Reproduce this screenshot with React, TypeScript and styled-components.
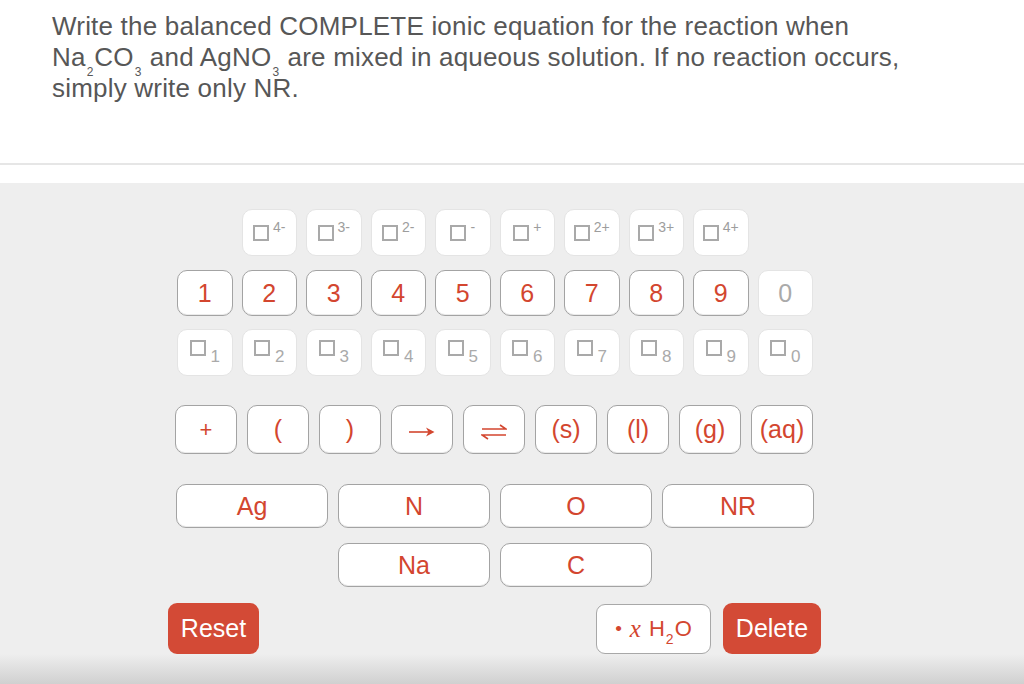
import React from 'react';
import styled, { createGlobalStyle, css } from 'styled-components';

const GlobalStyle = createGlobalStyle`
    html, body {
        margin: 0;
        padding: 0;
        background: #fff;
        font-family: "Liberation Sans", Arial, Helvetica, sans-serif;
    }
`;

const RED = '#d3462f';

const Page = styled.div`
    width: 1024px;
    height: 684px;
    overflow: hidden;
    display: flex;
    flex-direction: column;
`;

const Prompt = styled.div`
    box-sizing: border-box;
    height: 165px;
    padding: 11px 52px 0;
    border-bottom: 2px solid #e6e6e6;
    color: #575757;
    font-size: 26px;
    letter-spacing: 0.2px;
    line-height: 31px;
`;

const Sub = styled.sub`
    font-size: 12px;
    letter-spacing: 0;
    line-height: 0;
    position: relative;
    vertical-align: baseline;
    top: 10px;
    margin: 0 1px;
`;

const Panel = styled.section`
    flex: 1;
    margin-top: 18px;
    padding: 26px 0 0 168px;
    background: linear-gradient(to bottom, #eeeeee 0, #eeeeee calc(100% - 30px), #d0d0d0 100%);
`;

const Keypad = styled.div`
    width: 653px;
    display: flex;
    flex-direction: column;
`;

const KeyGrid = styled.div<{ $cols: number; $gap: number; $left: number; $right: number; $top: number; $h: number }>`
    display: grid;
    grid-template-columns: repeat(${p => p.$cols}, 1fr);
    grid-auto-rows: ${p => p.$h}px;
    column-gap: ${p => p.$gap}px;
    row-gap: 15px;
    margin-top: ${p => p.$top}px;
    margin-left: ${p => p.$left}px;
    margin-right: ${p => p.$right}px;
`;

const Key = styled.button<{ $outlined?: boolean; $muted?: boolean; $col?: number; $size?: number }>`
    box-sizing: border-box;
    display: flex;
    align-items: center;
    justify-content: center;
    padding: 0;
    background: #fff;
    border-radius: 10px;
    font-family: inherit;
    font-size: ${p => p.$size ?? 25}px;
    color: ${p => (p.$muted ? '#aaaaaa' : RED)};
    cursor: pointer;
    ${p => p.$col && css`grid-column-start: ${p.$col};`}
    ${p =>
        p.$outlined
            ? css`
                  border: 1px solid #a3a3a3;
                  box-shadow: inset 0 -1px 0 rgba(0, 0, 0, 0.08);
              `
            : css`
                  border: 1px solid #e4e4e4;
              `}
`;

const Slot = styled.span`
    box-sizing: border-box;
    width: 16px;
    height: 16px;
    border: 2px solid #a9a9a9;
`;

const SlotGroup = styled.span`
    display: inline-flex;
    align-items: flex-start;
`;

const Charge = styled.span`
    font-size: 14px;
    line-height: 14px;
    color: #9d9d9d;
    margin: -5px 0 0 4px;
`;

const Index = styled.span`
    font-size: 17px;
    line-height: 17px;
    color: #aaaaaa;
    margin: 8px 0 0 5px;
`;

const ArrowIcon = styled.svg`
    display: block;
    margin-top: 5px;
`;

const BottomBar = styled.div`
    display: flex;
    justify-content: space-between;
    align-items: center;
    margin-top: 16px;
    height: 51px;
`;

const ActionButton = styled.button<{ $w: number }>`
    width: ${p => p.$w}px;
    height: 51px;
    border: none;
    border-radius: 9px;
    background: #d34a36;
    color: #fff;
    font-family: inherit;
    font-size: 25px;
    padding: 0;
    cursor: pointer;
`;

const RightGroup = styled.div`
    display: flex;
    gap: 12px;
    align-items: center;
`;

const WaterButton = styled.button`
    box-sizing: border-box;
    width: 115px;
    height: 50px;
    border: 1px solid #a8a8a8;
    border-radius: 9px;
    background: #fff;
    color: ${RED};
    font-family: inherit;
    font-size: 22px;
    display: flex;
    align-items: center;
    justify-content: center;
    gap: 8px;
    padding: 0;
    cursor: pointer;
`;

const Dot = styled.span`
    font-size: 19px;
`;

const MathX = styled.span`
    font-family: "Liberation Serif", "Times New Roman", serif;
    font-style: italic;
    font-size: 25px;
`;

const WaterSub = styled.sub`
    font-size: 14px;
    line-height: 0;
    position: relative;
    vertical-align: baseline;
    top: 8px;
    margin: 0 1px;
`;

const RightArrow = () => (
    <ArrowIcon width="26" height="12" viewBox="0 0 26 12" aria-label="→">
        <path d="M0 6 H22" stroke={RED} strokeWidth="1.6" />
        <path d="M25.5 6 L17 1.5 L19.5 6 L17 10.5 Z" fill={RED} />
    </ArrowIcon>
);

const Equilibrium = () => (
    <ArrowIcon width="26" height="16" viewBox="0 0 26 16" aria-label="⇌">
        <path d="M1 5 H25 L19 1" stroke={RED} strokeWidth="1.6" fill="none" strokeLinejoin="miter" />
        <path d="M25 11 H1 L7 15" stroke={RED} strokeWidth="1.6" fill="none" strokeLinejoin="miter" />
    </ArrowIcon>
);

const charges = ['4-', '3-', '2-', '-', '+', '2+', '3+', '4+'];
const digits = ['1', '2', '3', '4', '5', '6', '7', '8', '9', '0'];
const symbols: { id: string; label: React.ReactNode; size?: number }[] = [
    { id: 'plus', label: '+', size: 22 },
    { id: 'open', label: '(' },
    { id: 'close', label: ')' },
    { id: 'arrow', label: <RightArrow /> },
    { id: 'eq', label: <Equilibrium /> },
    { id: 's', label: '(s)' },
    { id: 'l', label: '(l)' },
    { id: 'g', label: '(g)' },
    { id: 'aq', label: '(aq)' },
];

const App: React.FC = () => {
    return (
        <>
            <GlobalStyle />
            <Page>
                <Prompt>
                    Write the balanced COMPLETE ionic equation for the reaction when
                    <br />
                    Na<Sub>2</Sub>CO<Sub>3</Sub> and AgNO<Sub>3</Sub> are mixed in aqueous solution. If no reaction occurs,
                    <br />
                    simply write only NR.
                </Prompt>

                <Panel>
                    <Keypad>
                        <KeyGrid $cols={10} $gap={9} $left={9} $right={8} $top={0} $h={47}>
                            {charges.map((c, i) => (
                                <Key key={c} $col={i === 0 ? 2 : undefined}>
                                    <SlotGroup>
                                        <Slot />
                                        <Charge>{c}</Charge>
                                    </SlotGroup>
                                </Key>
                            ))}
                        </KeyGrid>

                        <KeyGrid $cols={10} $gap={9} $left={9} $right={8} $top={14} $h={46}>
                            {digits.map(d => (
                                <Key key={d} $outlined={d !== '0'} $muted={d === '0'}>
                                    {d}
                                </Key>
                            ))}
                        </KeyGrid>

                        <KeyGrid $cols={10} $gap={9} $left={9} $right={8} $top={13} $h={47}>
                            {digits.map(d => (
                                <Key key={d}>
                                    <SlotGroup>
                                        <Slot />
                                        <Index>{d}</Index>
                                    </SlotGroup>
                                </Key>
                            ))}
                        </KeyGrid>

                        <KeyGrid $cols={9} $gap={10} $left={7} $right={8} $top={29} $h={49}>
                            {symbols.map(s => (
                                <Key key={s.id} $outlined $size={s.size}>
                                    {s.label}
                                </Key>
                            ))}
                        </KeyGrid>

                        <KeyGrid $cols={4} $gap={10} $left={8} $right={7} $top={30} $h={44}>
                            <Key $outlined>Ag</Key>
                            <Key $outlined>N</Key>
                            <Key $outlined>O</Key>
                            <Key $outlined>NR</Key>
                            <Key $outlined $col={2}>Na</Key>
                            <Key $outlined>C</Key>
                        </KeyGrid>

                        <BottomBar>
                            <ActionButton $w={91}>Reset</ActionButton>
                            <RightGroup>
                                <WaterButton>
                                    <Dot>•</Dot>
                                    <MathX>x</MathX>
                                    <span>
                                        H<WaterSub>2</WaterSub>O
                                    </span>
                                </WaterButton>
                                <ActionButton $w={98}>Delete</ActionButton>
                            </RightGroup>
                        </BottomBar>
                    </Keypad>
                </Panel>
            </Page>
        </>
    );
};

export default App;
